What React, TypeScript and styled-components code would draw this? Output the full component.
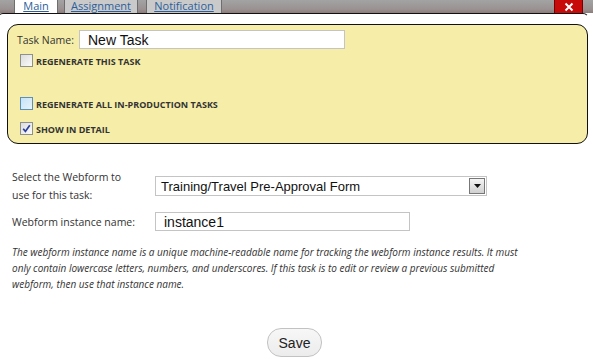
import React from "react";
import styled, { createGlobalStyle } from "styled-components";

const Global = createGlobalStyle`
  html, body {
    margin: 0;
    padding: 0;
    background: #ffffff;
    width: 593px;
    height: 360px;
    overflow: hidden;
  }
  * { box-sizing: border-box; }
`;

const Page = styled.div`
  width: 593px;
  height: 360px;
  font-family: "Open Sans", "DejaVu Sans", sans-serif;
  color: #333;
`;

const TabBar = styled.div`
  height: 13px;
  display: flex;
  align-items: flex-end;
  padding-left: 14px;
  background: linear-gradient(#a3a3a3, #9a9292 70%, #8c7c79);
  overflow: hidden;
`;

const Tab = styled.a<{ $w: number; $gap: number; $active?: boolean }>`
  width: ${(p) => p.$w}px;
  height: 14px;
  margin-right: ${(p) => p.$gap}px;
  display: flex;
  align-items: flex-end;
  justify-content: center;
  padding-bottom: 2px;
  background: ${(p) => (p.$active ? "#ffffff" : "#cacaca")};
  border-left: 1px solid #6e6e6e;
  border-right: 1px solid #6e6e6e;
  color: #2c5f9a;
  font-size: 11px;
  line-height: 11px;
  text-decoration: underline;
`;

const Spacer = styled.div`
  flex: 1;
`;

const Close = styled.div`
  width: 29px;
  height: 13px;
  margin-right: 10px;
  background: #c70a0a;
  border-left: 1px solid #7a0000;
  border-right: 1px solid #7a0000;
  display: flex;
  align-items: center;
  justify-content: center;
`;

const Dialog = styled.div`
  height: 347px;
  margin: 0 4px 0 -3px;
  padding: 10px 2px 0 9px;
  border-top: 1px solid #111;
  border-left: 1px solid #888;
  border-right: 1px solid transparent;
  border-radius: 6px 6px 0 0;
`;

const YellowBox = styled.div`
  width: 581px;
  background: #f6eea8;
  border: 1px solid #111;
  border-radius: 11px;
  padding: 4px 10px 7px 9px;
  display: flex;
  flex-direction: column;
`;

const NameRow = styled.div`
  display: flex;
  align-items: center;
  gap: 5px;
  height: 21px;
`;

const Label = styled.span`
  font-size: 10.5px;
  color: #333;
`;

const TextInput = styled.div<{ $w: number }>`
  width: ${(p) => p.$w}px;
  height: 19px;
  background: #fff;
  border: 1px solid #c4c4c4;
  font-family: "Liberation Sans", Arial, sans-serif;
  font-size: 14px;
  color: #111;
  padding-left: 8px;
  display: flex;
  align-items: center;
`;

const CheckRow = styled.label<{ $top: number }>`
  display: flex;
  align-items: center;
  gap: 3px;
  margin-top: ${(p) => p.$top}px;
  padding-left: 3px;
  font-size: 9px;
  font-weight: 700;
  color: #333;
  height: 14px;
`;

const Box = styled.span<{ $hover?: boolean }>`
  width: 13px;
  height: 13px;
  border: 1px solid ${(p) => (p.$hover ? "#5b8fc0" : "#8e8f8f")};
  background: ${(p) =>
    p.$hover
      ? "linear-gradient(135deg, #c6e4f6, #e8f4fb)"
      : "linear-gradient(135deg, #dcdcdc, #fbfbfb)"};
  display: flex;
  align-items: center;
  justify-content: center;
  margin-top: -2px;
`;

const FormGrid = styled.div`
  display: grid;
  grid-template-columns: 143px auto;
  row-gap: 8px;
  margin-top: 24px;
  padding-left: 5px;
  align-items: center;
`;

const TwoLineLabel = styled.span`
  font-size: 10.5px;
  line-height: 18px;
  color: #333;
`;

const SelectBox = styled.div`
  width: 332px;
  height: 20px;
  border: 1px solid #c4c4c4;
  background: #fff;
  display: flex;
  align-items: center;
  justify-content: space-between;
  padding: 0 1px 0 5px;
  font-family: "Liberation Sans", Arial, sans-serif;
  font-size: 13px;
  color: #111;
`;

const Arrow = styled.span`
  width: 16px;
  height: 16px;
  border: 1px solid #777;
  background: linear-gradient(#f4f4f4, #d0d0d0);
  display: flex;
  align-items: center;
  justify-content: center;
`;

const Help = styled.p`
  margin: 13px 0 0 5px;
  width: 506px;
  font-size: 10px;
  font-style: italic;
  line-height: 16px;
  color: #333;
`;

const Actions = styled.div`
  display: flex;
  justify-content: center;
  margin-top: 36px;
  padding-right: 4px;
`;

const SaveButton = styled.button`
  width: 55px;
  height: 29px;
  border-radius: 14px;
  border: 1px solid #c2c2c2;
  background: linear-gradient(#f7f7f7, #ececec);
  font-family: "Liberation Sans", Arial, sans-serif;
  font-size: 14px;
  color: #222;
`;

const Check = () => (
  <svg width="9" height="9" viewBox="0 0 9 9">
    <path d="M1.2 4.8 L3.4 7.4 L7.8 1.2" fill="none" stroke="#2b3f9e" strokeWidth="1.7" />
  </svg>
);

export default function App() {
  return (
    <Page>
      <Global />
      <TabBar>
        <Tab $active $w={44} $gap={6}>Main</Tab>
        <Tab $w={74} $gap={8}>Assignment</Tab>
        <Tab $w={76} $gap={0}>Notification</Tab>
        <Spacer />
        <Close>
          <svg width="10" height="10" viewBox="0 0 10 10">
            <path d="M1.5 1.5 L8.5 8.5 M8.5 1.5 L1.5 8.5" stroke="#fff" strokeWidth="2" />
          </svg>
        </Close>
      </TabBar>
      <Dialog>
        <YellowBox>
          <NameRow>
            <Label>Task Name:</Label>
            <TextInput $w={266}>New Task</TextInput>
          </NameRow>
          <CheckRow $top={4}>
            <Box />
            REGENERATE THIS TASK
          </CheckRow>
          <CheckRow $top={29}>
            <Box $hover />
            REGENERATE ALL IN-PRODUCTION TASKS
          </CheckRow>
          <CheckRow $top={11}>
            <Box>
              <Check />
            </Box>
            SHOW IN DETAIL
          </CheckRow>
        </YellowBox>
        <FormGrid>
          <TwoLineLabel>
            Select the Webform to
            <br />
            use for this task:
          </TwoLineLabel>
          <SelectBox>
            Training/Travel Pre-Approval Form
            <Arrow>
              <svg width="7" height="4" viewBox="0 0 7 4">
                <path d="M0 0 H7 L3.5 4 Z" fill="#111" />
              </svg>
            </Arrow>
          </SelectBox>
          <Label>Webform instance name:</Label>
          <TextInput $w={255}>instance1</TextInput>
        </FormGrid>
        <Help>
          The webform instance name is a unique machine-readable name for tracking the webform
          instance results. It must only contain lowercase letters, numbers, and underscores. If
          this task is to edit or review a previous submitted webform, then use that instance name.
        </Help>
        <Actions>
          <SaveButton>Save</SaveButton>
        </Actions>
      </Dialog>
    </Page>
  );
}
